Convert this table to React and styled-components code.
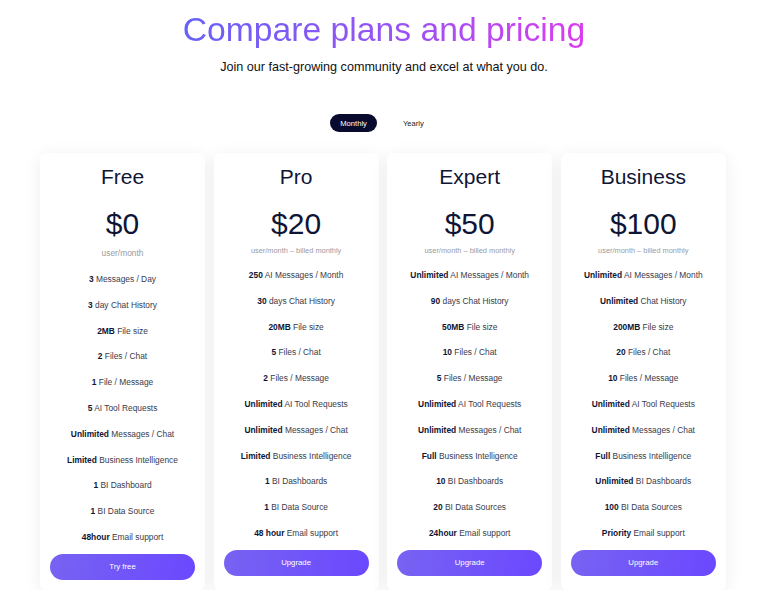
import React, { useState } from 'react';
import styled, { createGlobalStyle } from 'styled-components';

const GlobalStyle = createGlobalStyle`
    * {
        box-sizing: border-box;
    }
    body {
        margin: 0;
        background: #ffffff;
        font-family: "Liberation Sans", Arial, sans-serif;
        color: #0f1535;
    }
`;

const Page = styled.div`
    padding-top: 10px;
    display: flex;
    flex-direction: column;
    align-items: center;
`;

const Heading = styled.h1`
    margin: 0;
    font-size: 33.7px;
    font-weight: 400;
    line-height: 39px;
    background: linear-gradient(90deg, #6662f6 0%, #9a52f3 55%, #db3cef 100%);
    -webkit-background-clip: text;
    background-clip: text;
    color: transparent;
`;

const Lead = styled.p`
    margin: 11px 0 0;
    font-size: 12.6px;
    line-height: 15px;
    color: #111;
`;

const Toggle = styled.div`
    margin-top: 39px;
    display: flex;
    gap: 16px;
    margin-left: -4px;
`;

const ToggleButton = styled.button`
    height: 18px;
    padding: 0 10px;
    border: none;
    border-radius: 9px;
    font-family: inherit;
    font-size: 7.6px;
    cursor: pointer;
    background: ${p => (p.$active ? '#090b2e' : 'transparent')};
    color: ${p => (p.$active ? '#ffffff' : '#222')};
`;

const Grid = styled.div`
    margin-top: 21px;
    align-self: flex-start;
    margin-left: 40px;
    display: grid;
    grid-template-columns: repeat(4, 165px);
    gap: 8.6px;
`;

const Card = styled.div`
    background: #fff;
    border-radius: 6px;
    box-shadow: 0 3px 18px rgba(20, 20, 40, 0.07);
    padding: 11px 10px 10px;
    display: flex;
    flex-direction: column;
    align-items: center;
    text-align: center;
`;

const PlanName = styled.h2`
    margin: 0;
    font-size: 21px;
    font-weight: 400;
    line-height: 25px;
    color: #0f1535;
`;

const Price = styled.div`
    margin-top: 16.6px;
    font-size: 30px;
    line-height: 36px;
    color: #0f1535;
`;

const Billing = styled.div`
    font-size: ${p => (p.$short ? '8.4px' : '7.4px')};
    line-height: 12px;
    margin: ${p => (p.$short ? '5.4px 0 8.1px' : '3.4px 0 6.1px')};
    color: #9a9aa3;
`;

const Features = styled.ul`
    list-style: none;
    margin: 0;
    padding: 0;
    width: 100%;
`;

const Feature = styled.li`
    font-size: 8.4px;
    line-height: 25.8px;
    color: #3a3b4a;

    b {
        color: #0f1535;
        font-weight: 700;
    }
`;

const Action = styled.button`
    margin-top: 3px;
    width: 100%;
    height: 26px;
    border: none;
    border-radius: 13px;
    background: linear-gradient(100deg, #7763f2 0%, #6b48ff 100%);
    color: #fff;
    font-family: inherit;
    font-size: 7.8px;
    cursor: pointer;
`;

const plans = [
    {
        name: 'Free',
        price: '$0',
        billing: 'user/month',
        action: 'Try free',
        features: [
            ['3', 'Messages / Day'],
            ['3', 'day Chat History'],
            ['2MB', 'File size'],
            ['2', 'Files / Chat'],
            ['1', 'File / Message'],
            ['5', 'AI Tool Requests'],
            ['Unlimited', 'Messages / Chat'],
            ['Limited', 'Business Intelligence'],
            ['1', 'BI Dashboard'],
            ['1', 'BI Data Source'],
            ['48hour', 'Email support'],
        ],
    },
    {
        name: 'Pro',
        price: '$20',
        billing: 'user/month \u2013 billed monthly',
        action: 'Upgrade',
        features: [
            ['250', 'AI Messages / Month'],
            ['30', 'days Chat History'],
            ['20MB', 'File size'],
            ['5', 'Files / Chat'],
            ['2', 'Files / Message'],
            ['Unlimited', 'AI Tool Requests'],
            ['Unlimited', 'Messages / Chat'],
            ['Limited', 'Business Intelligence'],
            ['1', 'BI Dashboards'],
            ['1', 'BI Data Source'],
            ['48 hour', 'Email support'],
        ],
    },
    {
        name: 'Expert',
        price: '$50',
        billing: 'user/month \u2013 billed monthly',
        action: 'Upgrade',
        features: [
            ['Unlimited', 'AI Messages / Month'],
            ['90', 'days Chat History'],
            ['50MB', 'File size'],
            ['10', 'Files / Chat'],
            ['5', 'Files / Message'],
            ['Unlimited', 'AI Tool Requests'],
            ['Unlimited', 'Messages / Chat'],
            ['Full', 'Business Intelligence'],
            ['10', 'BI Dashboards'],
            ['20', 'BI Data Sources'],
            ['24hour', 'Email support'],
        ],
    },
    {
        name: 'Business',
        price: '$100',
        billing: 'user/month \u2013 billed monthly',
        action: 'Upgrade',
        features: [
            ['Unlimited', 'AI Messages / Month'],
            ['Unlimited', 'Chat History'],
            ['200MB', 'File size'],
            ['20', 'Files / Chat'],
            ['10', 'Files / Message'],
            ['Unlimited', 'AI Tool Requests'],
            ['Unlimited', 'Messages / Chat'],
            ['Full', 'Business Intelligence'],
            ['Unlimited', 'BI Dashboards'],
            ['100', 'BI Data Sources'],
            ['Priority', 'Email support'],
        ],
    },
];

const App = () => {
    const [period, setPeriod] = useState('monthly');

    return (
        <Page>
            <GlobalStyle />
            <Heading>Compare plans and pricing</Heading>
            <Lead>Join our fast-growing community and excel at what you do.</Lead>
            <Toggle>
                <ToggleButton $active={period === 'monthly'} onClick={() => setPeriod('monthly')}>
                    Monthly
                </ToggleButton>
                <ToggleButton $active={period === 'yearly'} onClick={() => setPeriod('yearly')}>
                    Yearly
                </ToggleButton>
            </Toggle>
            <Grid>
                {plans.map(plan => (
                    <Card key={plan.name}>
                        <PlanName>{plan.name}</PlanName>
                        <Price>{plan.price}</Price>
                        <Billing $short={plan.name === 'Free'}>{plan.billing}</Billing>
                        <Features>
                            {plan.features.map(([strong, rest]) => (
                                <Feature key={rest}>
                                    <b>{strong}</b> {rest}
                                </Feature>
                            ))}
                        </Features>
                        <Action>{plan.action}</Action>
                    </Card>
                ))}
            </Grid>
        </Page>
    );
};

export default App;
